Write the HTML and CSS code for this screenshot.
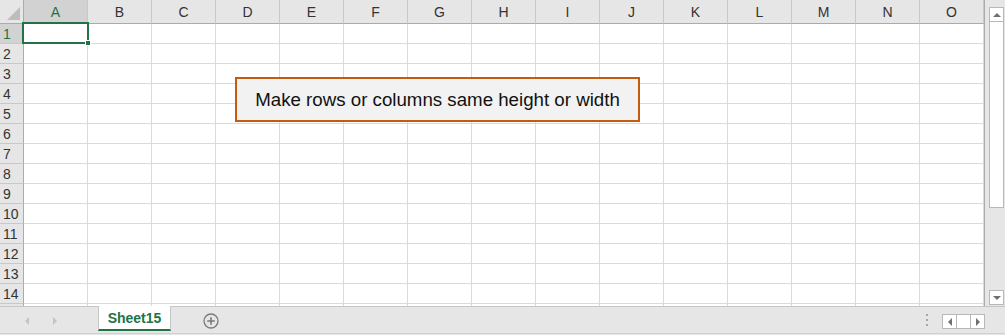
FILE: index.html
```html
<!DOCTYPE html>
<html lang="en">
<head>
<meta charset="UTF-8">
<title>Sheet15</title>
<link rel="stylesheet" href="styles.css">
</head>
<body>

<div class="window">
    <div class="sheet">
        <div class="grid-wrap">
            <div class="grid" id="grid"></div>
            <div class="note">Make rows or columns same height or width</div>
        </div>
        <div class="vscroll">
            <div class="sbtn up"><span class="tri-up"></span></div>
            <div class="thumb"></div>
            <div class="track"></div>
            <div class="sbtn down"><span class="tri-down"></span></div>
        </div>
    </div>

    <div class="tabbar">
        <div class="nav">
            <span class="tri-left faint"></span>
            <span class="tri-right faint"></span>
        </div>
        <div class="tab">Sheet15</div>
        <div class="add">
            <svg width="16" height="16" viewBox="0 0 16 16">
                <circle cx="8" cy="8" r="7" fill="none" stroke="#7a7a7a" stroke-width="1.3"/>
                <path d="M8 4.2v7.6M4.2 8h7.6" stroke="#7a7a7a" stroke-width="1.6"/>
            </svg>
        </div>
        <div class="spacer"></div>
        <div class="dots"><i></i><i></i><i></i></div>
        <div class="hscroll">
            <div class="hbtn"><span class="tri-left"></span></div>
            <div class="hbtn mid"></div>
            <div class="hbtn"><span class="tri-right"></span></div>
        </div>
    </div>
</div>

<script>
    const grid = document.getElementById('grid');
    const cols = 'ABCDEFGHIJKLMNO'.split('');
    const rows = 14;

    let html = '<div class="corner"><span></span></div>';
    cols.forEach((c, i) => {
        html += `<div class="colhead${i === 0 ? ' sel' : ''}">${c}</div>`;
    });
    for (let r = 1; r <= rows + 1; r++) {
        const last = r > rows;
        html += `<div class="rowhead${r === 1 ? ' sel' : ''}${last ? ' cut' : ''}">${last ? '' : r}</div>`;
        cols.forEach((c, i) => {
            const active = r === 1 && i === 0;
            html += `<div class="cell${last ? ' cut' : ''}">${active ? '<div class="active"><span class="handle"></span></div>' : ''}</div>`;
        });
    }
    grid.innerHTML = html;
</script>

</body>
</html>
```

FILE: styles.css
```css
:root {
    --line: #dadada;
    --head: #e6e6e6;
    --head-line: #c8c8c8;
    --head-edge: #ababab;
    --green: #217346;
    --text: #262626;
}

* {
    box-sizing: border-box;
}

body {
    margin: 0;
    background: #fff;
    font-family: 'Liberation Sans', Arial, sans-serif;
    color: var(--text);
}

.window {
    width: 1005px;
    height: 335px;
    overflow: hidden;
    display: flex;
    flex-direction: column;
}

.sheet {
    display: flex;
    height: 306px;
}

.grid-wrap {
    position: relative;
    width: 985px;
    overflow: hidden;
    border-right: 1px solid var(--head-edge);
}

.grid {
    display: grid;
    grid-template-columns: 24px repeat(15, 64px);
    grid-template-rows: 24px repeat(14, 20px) 3px;
}

.corner {
    position: relative;
    background: var(--head);
    border-right: 1px solid var(--head-edge);
    border-bottom: 1px solid var(--head-edge);
}

.corner span {
    position: absolute;
    right: 3px;
    bottom: 3px;
    width: 0;
    height: 0;
    border-left: 13px solid transparent;
    border-bottom: 13px solid #bdbdbd;
}

.colhead {
    background: var(--head);
    border-right: 1px solid var(--head-line);
    border-bottom: 1px solid var(--head-edge);
    font-size: 14px;
    text-align: center;
    line-height: 22px;
    padding-top: 1px;
    color: #333;
}

.colhead.sel,
.rowhead.sel {
    background: #d2d2d2;
    color: var(--green);
}

.rowhead {
    background: var(--head);
    border-right: 1px solid var(--head-edge);
    border-bottom: 1px solid var(--head-line);
    font-size: 14px;
    line-height: 20px;
    padding-left: 3px;
    color: #333;
}

.cell {
    position: relative;
    border-right: 1px solid var(--line);
    border-bottom: 1px solid var(--line);
}

.cut {
    border-bottom: none;
}

.active {
    position: absolute;
    left: -2px;
    top: -2px;
    width: 67px;
    height: 22px;
    border: 2px solid var(--green);
    z-index: 2;
}

.handle {
    position: absolute;
    right: -4px;
    bottom: -4px;
    width: 6px;
    height: 6px;
    background: var(--green);
    border: 1px solid #fff;
}

.note {
    position: absolute;
    left: 235px;
    top: 77px;
    width: 405px;
    height: 45px;
    background: #f2f2f2;
    border: 2px solid #c55a11;
    font-size: 18.7px;
    color: #111;
    display: flex;
    align-items: center;
    justify-content: center;
    z-index: 3;
}

.vscroll {
    width: 20px;
    background: var(--head);
    display: flex;
    flex-direction: column;
    align-items: center;
    padding: 7px 0 0 3px;
}

.sbtn {
    width: 15px;
    height: 15px;
    background: #fff;
    border: 1px solid #b8b8b8;
    display: flex;
    align-items: center;
    justify-content: center;
}

.thumb {
    width: 15px;
    height: 186px;
    background: #fff;
    border: 1px solid #b8b8b8;
    border-top: none;
}

.track {
    flex: 1;
}

.sbtn.down {
    margin-bottom: 1px;
}

.tri-up,
.tri-down,
.tri-left,
.tri-right {
    display: inline-block;
    width: 0;
    height: 0;
}

.tri-up {
    border-left: 4px solid transparent;
    border-right: 4px solid transparent;
    border-bottom: 4px solid #707070;
}

.tri-down {
    border-left: 4px solid transparent;
    border-right: 4px solid transparent;
    border-top: 4px solid #707070;
}

.tri-left {
    border-top: 4px solid transparent;
    border-bottom: 4px solid transparent;
    border-right: 4px solid #707070;
}

.tri-right {
    border-top: 4px solid transparent;
    border-bottom: 4px solid transparent;
    border-left: 4px solid #707070;
}

.faint.tri-left {
    border-right-color: #c4c4c4;
}

.faint.tri-right {
    border-left-color: #c4c4c4;
}

.tabbar {
    flex: 1;
    background: var(--head);
    border-top: 1px solid #c6c6c6;
    display: flex;
    align-items: flex-start;
    position: relative;
}

.tabbar::after {
    content: "";
    position: absolute;
    left: 0;
    right: 0;
    bottom: 1px;
    border-bottom: 1px solid #d0d0d0;
}

.nav {
    display: flex;
    gap: 24px;
    padding: 10px 0 0 25px;
    width: 98px;
}

.tab {
    width: 73px;
    height: 25px;
    margin-top: -1px;
    background: #fff;
    border-left: 1px solid #c6c6c6;
    border-right: 1px solid #c6c6c6;
    border-bottom: 2px solid var(--green);
    color: var(--green);
    font-weight: bold;
    font-size: 14px;
    text-align: center;
    line-height: 24px;
}

.add {
    margin: 6px 0 0 32px;
    height: 16px;
}

.spacer {
    flex: 1;
}

.dots {
    display: flex;
    flex-direction: column;
    gap: 3px;
    margin: 7px 14px 0 0;
}

.dots i {
    width: 2px;
    height: 2px;
    background: #a8a8a8;
}

.hscroll {
    display: flex;
    margin: 7px 20px 0 0;
}

.hbtn {
    width: 15px;
    height: 15px;
    background: #fff;
    border: 1px solid #b8b8b8;
    display: flex;
    align-items: center;
    justify-content: center;
}

.hbtn.mid {
    width: 13px;
    border-left: none;
    border-right: none;
}
```
